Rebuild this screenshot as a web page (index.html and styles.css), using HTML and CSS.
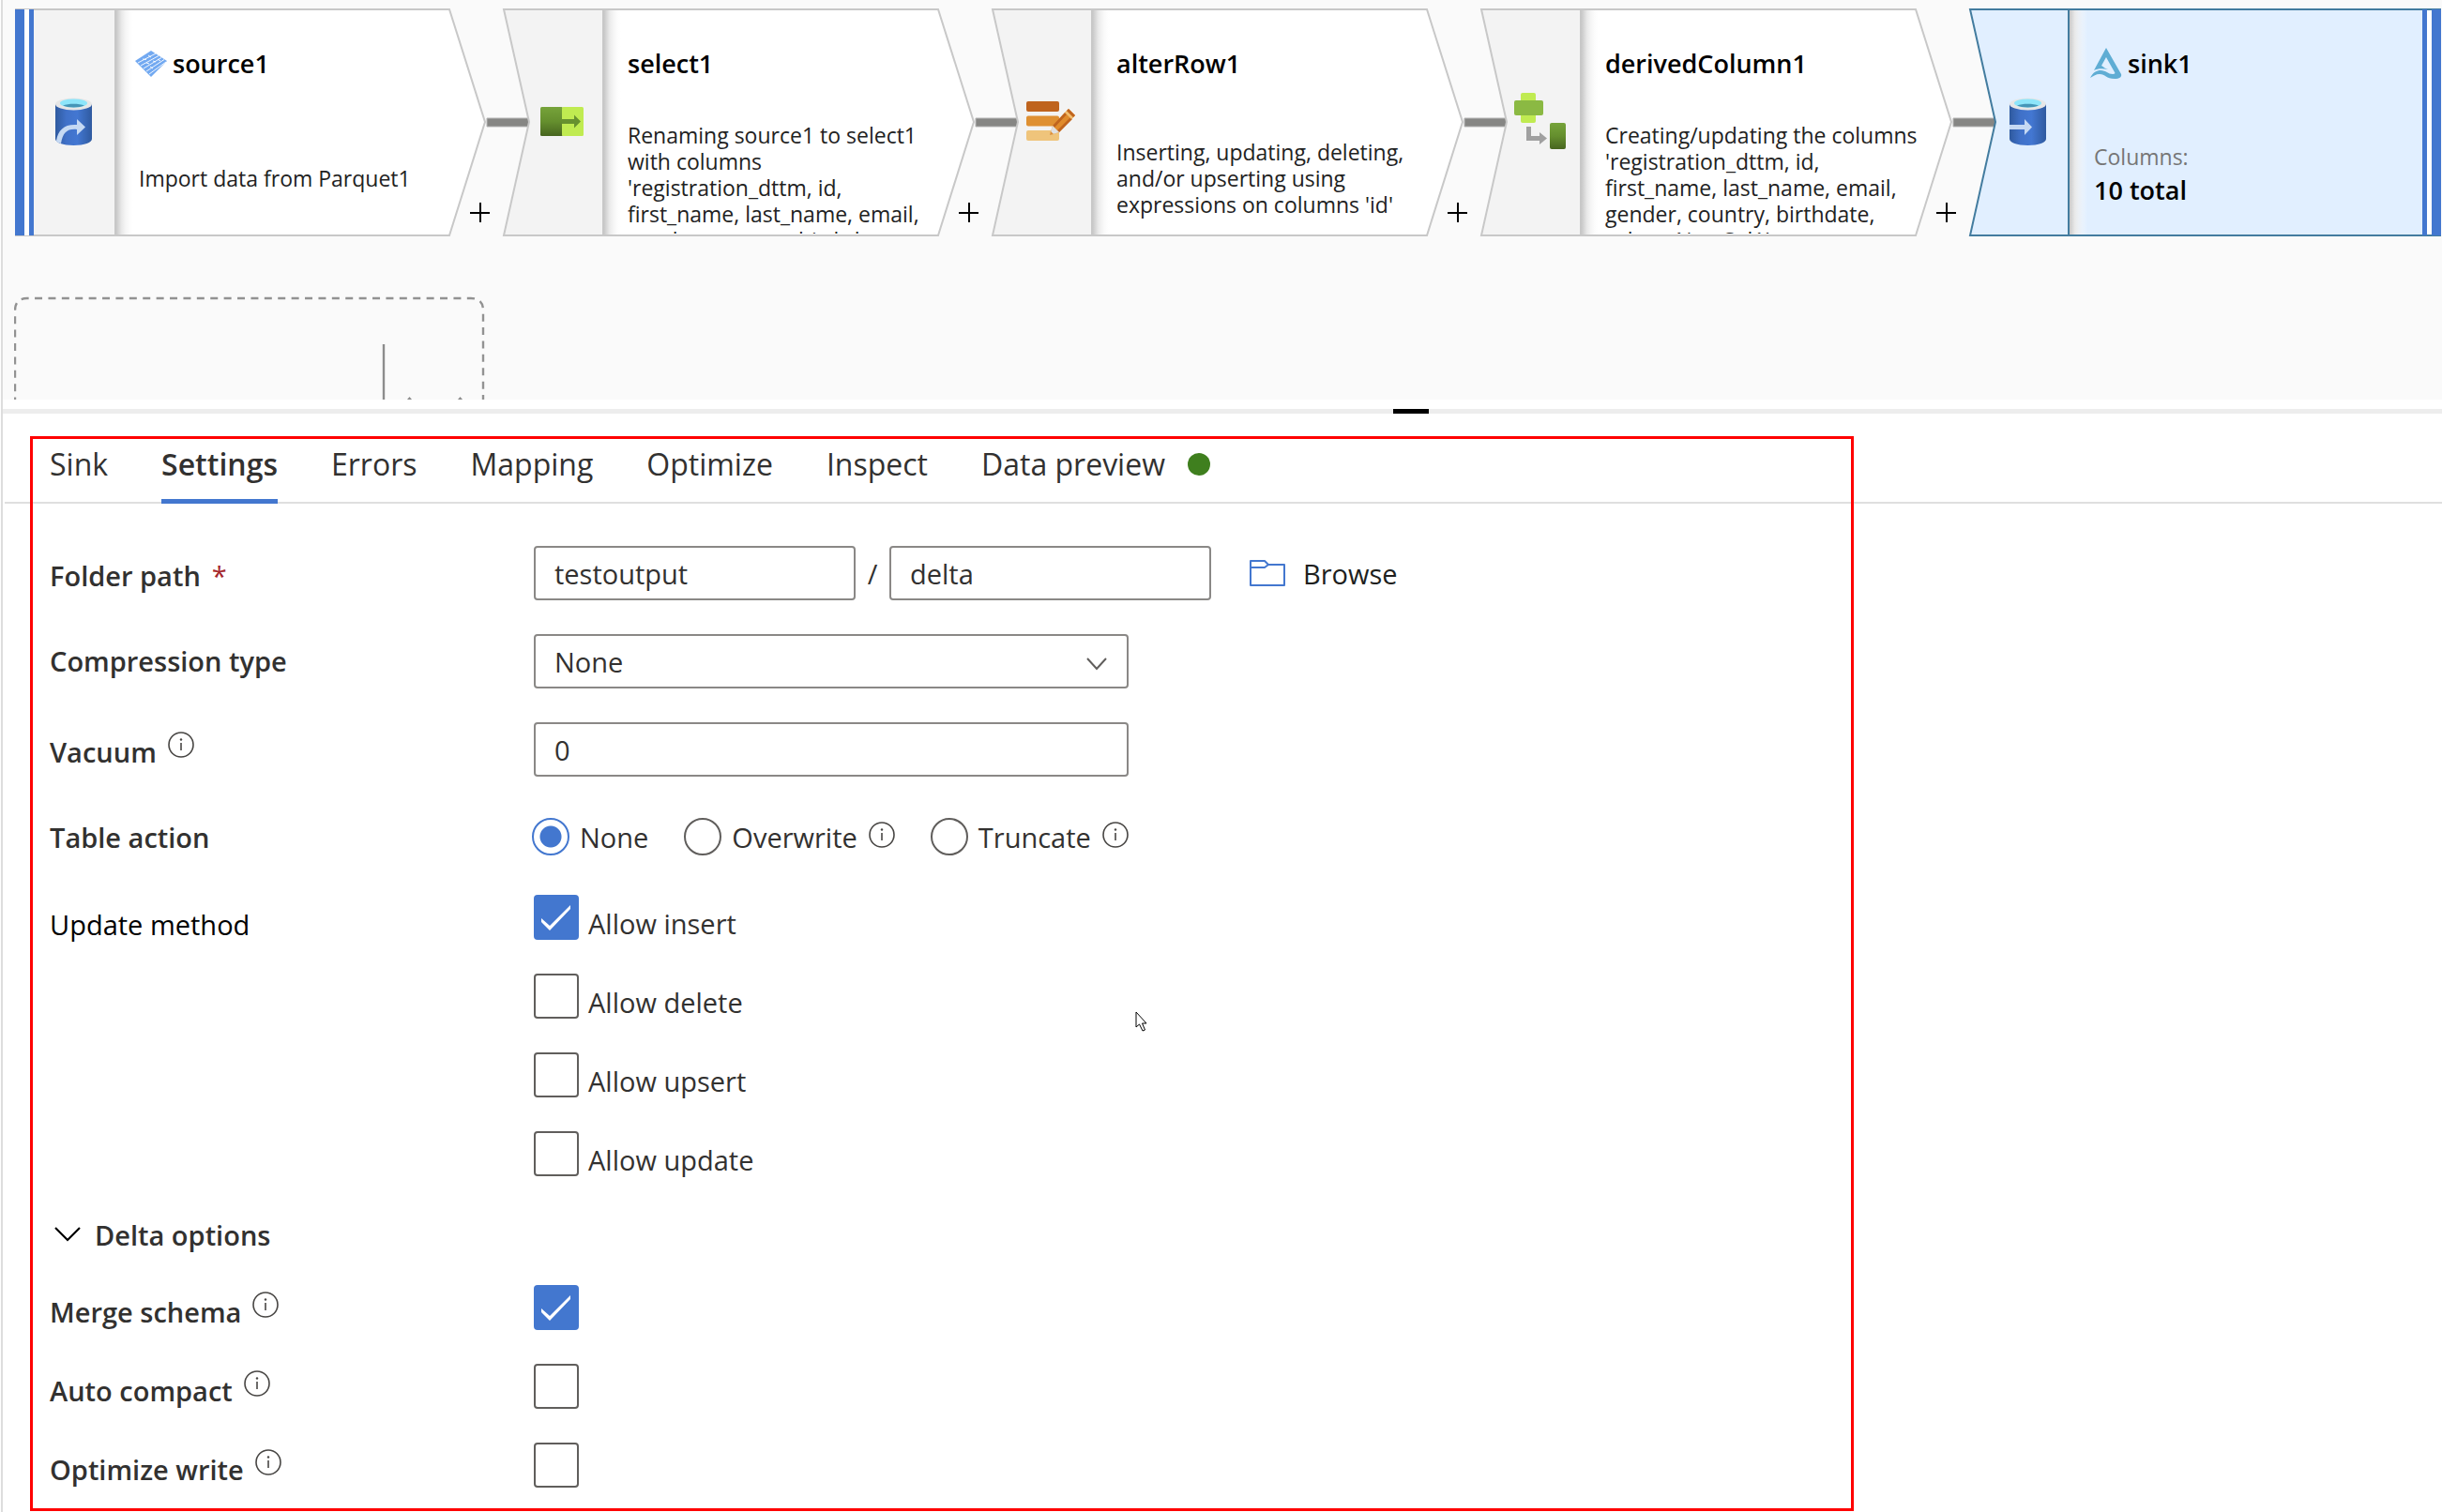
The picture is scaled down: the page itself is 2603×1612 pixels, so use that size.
FILE: index.html
```html
<!DOCTYPE html>
<html lang="en">
<head>
  <meta charset="UTF-8" />
  <title>Data flow - sink1</title>
  <meta name="viewport" content="width=device-width, initial-scale=1.0" />
  <link rel="stylesheet" href="styles.css">
</head>
<body>
  <!-- shared gradients and the info icon -->
  <svg class="defs" width="0" height="0" aria-hidden="true">
    <defs>
      <linearGradient id="shade" x1="0" x2="1" y1="0" y2="0">
        <stop offset="0" stop-color="#c9c9c9" />
        <stop offset="0.3" stop-color="#e9e9e9" />
        <stop offset="1" stop-color="#ffffff" stop-opacity="0" />
      </linearGradient>
      <linearGradient id="can" x1="0" x2="1" y1="0" y2="0">
        <stop offset="0" stop-color="#2f5a9f" />
        <stop offset="0.3" stop-color="#4071c8" />
        <stop offset="0.6" stop-color="#4377d2" />
        <stop offset="1" stop-color="#2f5a9f" />
      </linearGradient>
      <linearGradient id="green" x1="0" x2="0" y1="0" y2="1">
        <stop offset="0" stop-color="#76a33a" />
        <stop offset="0.5" stop-color="#658f2e" />
        <stop offset="1" stop-color="#47651f" />
      </linearGradient>
      <symbol id="info" viewBox="0 0 28 28">
        <circle cx="14" cy="14" r="13" fill="none" stroke="#484644" stroke-width="1.6" />
        <path d="M14 12V20" stroke="#484644" stroke-width="1.6" />
        <circle cx="14" cy="8.5" r="1.2" fill="#484644" />
      </symbol>
    </defs>
  </svg>

  <main class="editor">
    <section class="canvas">
      <div class="stream">
        <article class="node">
          <svg class="shape" viewBox="0 0 502 243">
            <path d="M2 1H108V242H2Z" fill="#f3f3f3" stroke="#c8c8c8" stroke-width="2" />
            <path d="M108 1H464L502 121L464 242H108Z" fill="#ffffff" stroke="#c8c8c8" stroke-width="2" />
            <path d="M109 2H128V241H109Z" fill="url(#shade)" />
            <path d="M1 1H11V242H1Z M16 1H21V242H16Z" fill="#4377cf" />
            <path d="M11 1H16V242H11Z" fill="#ffffff" />
            <g transform="translate(44 95)">
              <path d="M0 7V44C0 48 8 51 19.500 51S39 48 39 44V7Z" fill="url(#can)" />
              <ellipse cx="19.500" cy="7" rx="19.500" ry="6.500" fill="#e6e6e6" />
              <ellipse cx="19.500" cy="6" rx="14.500" ry="4.500" fill="#8de5fa" />
              <path d="M8 8.500C14 6 25 6 31 8.500C26 11 13 11 8 8.500Z" fill="#4596b8" />
              <path d="M1 46C3 34 10 28 23 29V23L32 31.500L23 40V34C13 33 8 37 6 49C3 48 1 47.500 1 46Z" fill="#c5d9f3" />
            </g>
          </svg>
          <div class="node-body">
            <h2 class="node-title with-icon">
              <svg width="34" height="28" viewBox="0 0 34 28">
                <path d="M17 0L34 11L17 28L0 11Z" fill="#72a9f1" />
                <path d="M3 13L22 3M6 16L25 5.500M9 19L28 7.500M12 22L31 9.500M15 25L33 12M8 9L12 9.500M14 5L17 7M12 13L15 14M19 11L22 12M16 17L19 19M24 9L27 11" stroke="#ffffff" stroke-width="0.9" />
              </svg>source1</h2>
            <div class="node-text"><p>Import data from Parquet1</p></div>
          </div>
          <button class="add" aria-label="Add after source1"></button>
        </article>

        <article class="node">
          <svg class="shape" viewBox="0 0 502 243">
            <path d="M-17 117H28V126H-17Z" fill="#868684" stroke="#b5b5b5" />
            <path d="M1 1H107V242H1L28 121Z" fill="#f3f3f3" stroke="#c8c8c8" stroke-width="2" />
            <path d="M107 1H464L502 121L464 242H107Z" fill="#ffffff" stroke="#c8c8c8" stroke-width="2" />
            <path d="M108 2H127V241H108Z" fill="url(#shade)" />
            <g transform="translate(40 105)">
              <rect width="24" height="31" rx="1.500" fill="url(#green)" />
              <rect x="23" width="23" height="31" rx="1.500" fill="#c0eb51" />
              <path d="M23 13H36V8.500L43 15.500L36 22.500V18H23Z" fill="#67912f" />
            </g>
          </svg>
          <div class="node-body">
            <h2 class="node-title">select1</h2>
            <div class="node-text"><p>Renaming source1 to select1 with columns 'registration_dttm, id, first_name, last_name, email, gender, country, birthdate, salary'</p></div>
          </div>
          <button class="add" aria-label="Add after select1"></button>
        </article>

        <article class="node">
          <svg class="shape" viewBox="0 0 502 243">
            <path d="M-17 117H28V126H-17Z" fill="#868684" stroke="#b5b5b5" />
            <path d="M1 1H107V242H1L28 121Z" fill="#f3f3f3" stroke="#c8c8c8" stroke-width="2" />
            <path d="M107 1H464L502 121L464 242H107Z" fill="#ffffff" stroke="#c8c8c8" stroke-width="2" />
            <path d="M108 2H127V241H108Z" fill="url(#shade)" />
            <g transform="translate(37 99)">
              <rect width="35" height="11" rx="2" fill="#bf641e" />
              <rect y="15.500" width="35" height="11" rx="2" fill="#df9032" />
              <rect y="31" width="35" height="11" rx="2" fill="#efc47b" />
              <path d="M25 36L28 26L45 8L52 15L35 33Z" fill="#e08b2c" />
              <path d="M28 26L41 12L43 14L30 28ZM33 31L47 17L49 19L35 33Z" fill="#bf641e" />
              <path d="M41 12L43 10L50 17L48 19Z" fill="#f0bd70" />
              <path d="M43 10L45 8L52 15L50 17Z" fill="#bf641e" />
              <path d="M25 36L28 26L35 33Z" fill="#e0e0e0" />
              <path d="M25 36L26 32L29 35Z" fill="#df9032" />
            </g>
          </svg>
          <div class="node-body">
            <h2 class="node-title">alterRow1</h2>
            <div class="node-text"><p>Inserting, updating, deleting, and/or upserting using expressions on columns 'id'</p></div>
          </div>
          <button class="add" aria-label="Add after alterRow1"></button>
        </article>

        <article class="node">
          <svg class="shape" viewBox="0 0 502 243">
            <path d="M-17 117H28V126H-17Z" fill="#868684" stroke="#b5b5b5" />
            <path d="M1 1H107V242H1L28 121Z" fill="#f3f3f3" stroke="#c8c8c8" stroke-width="2" />
            <path d="M107 1H464L502 121L464 242H107Z" fill="#ffffff" stroke="#c8c8c8" stroke-width="2" />
            <path d="M108 2H127V241H108Z" fill="url(#shade)" />
            <g transform="translate(36 90)">
              <rect x="7" width="16" height="32" rx="2" fill="#c0eb51" />
              <rect y="8" width="31" height="16" rx="2" fill="#8bb943" />
              <rect x="38" y="32" width="17" height="28" rx="2" fill="url(#green)" />
              <path d="M13 36H18V46H27V42L35 48.500L27 55V51H13Z" fill="#a0a0a0" />
            </g>
          </svg>
          <div class="node-body">
            <h2 class="node-title">derivedColumn1</h2>
            <div class="node-text"><p>Creating/updating the columns 'registration_dttm, id, first_name, last_name, email, gender, country, birthdate, salary, NewCol1'</p></div>
          </div>
          <button class="add" aria-label="Add after derivedColumn1"></button>
        </article>

        <article class="node">
          <svg class="shape" viewBox="0 0 502 243">
            <path d="M-17 117H28V126H-17Z" fill="#868684" stroke="#b5b5b5" />
            <path d="M1 1H106V242H1L28 121Z" fill="#e1efff" stroke="#437c9f" stroke-width="2" />
            <path d="M106 1H502V242H106Z" fill="#e1efff" stroke="#437c9f" stroke-width="2" />
            <path d="M107 2H126V241H107Z" fill="url(#shade)" />
            <path d="M493 1H503V242H493Z M483 1H488V242H483Z" fill="#4377cf" />
            <path d="M488 2H493V241H488Z" fill="#ffffff" />
            <g transform="translate(43 95)">
              <path d="M0 7V44C0 48 8 51 19.500 51S39 48 39 44V7Z" fill="url(#can)" />
              <ellipse cx="19.500" cy="7" rx="19.500" ry="6.500" fill="#e6e6e6" />
              <ellipse cx="19.500" cy="6" rx="14.500" ry="4.500" fill="#8de5fa" />
              <path d="M8 8.500C14 6 25 6 31 8.500C26 11 13 11 8 8.500Z" fill="#4596b8" />
              <path d="M0 29H16V23L24 31.500L16 40V34H0Z" fill="#c5d9f3" />
            </g>
          </svg>
          <div class="node-body">
            <h2 class="node-title with-icon">
              <svg width="34" height="34" viewBox="0 0 34 34">
                <path d="M17 0L33 28C34 31 31 33 26 33C17 33 16 28 10 28C6 28 4 30 0 32C3 26 7 24 11 24C17 24 19 28 24 28C26 28 27 27 26 26L17 10L12 19C15 21 16 22 19 23C13 22 8 22 4 24Z" fill="#5fadd4" />
              </svg>sink1</h2>
            <div class="node-count"><span>Columns:</span><strong>10 total</strong></div>
          </div>
        </article>
      </div>

      <!-- empty source placeholder, cut off by the splitter -->
      <svg class="placeholder" width="504" height="110" viewBox="0 0 504 110">
        <path d="M1 130V15Q1 2 14 2H487Q500 2 500 15V130" fill="none" stroke="#929292" stroke-width="2.400" stroke-dasharray="8 6.400" />
        <path d="M394 51V110" stroke="#8c8c8c" stroke-width="2.400" />
        <path d="M419 110L421.500 107L424 110ZM473 110L475.500 107L478 110Z" fill="#8c8c8c" />
      </svg>
    </section>

    <div class="splitter"><span class="grip"></span></div>

    <section class="panel">
      <nav class="tabs">
        <a href="#sink">Sink</a>
        <a href="#settings" class="active">Settings</a>
        <a href="#errors">Errors</a>
        <a href="#mapping">Mapping</a>
        <a href="#optimize">Optimize</a>
        <a href="#inspect">Inspect</a>
        <a href="#preview">Data preview<span class="dot"></span></a>
      </nav>

      <form class="settings" id="settings">
        <div class="field">
          <label class="name low" for="container">Folder path <span class="required">*</span></label>
          <div class="control">
            <input type="text" class="box short" id="container" value="testoutput" />
            <span class="slash">/</span>
            <input type="text" class="box short" id="folder" value="delta" aria-label="Folder" />
            <button type="button" class="browse">
              <svg width="38" height="30" viewBox="0 0 38 30">
                <path d="M1 28V2H16L20 6H37V28ZM1 9H16L20 6" fill="none" stroke="#4377cf" stroke-width="2" stroke-linejoin="round" />
              </svg>Browse</button>
          </div>
        </div>

        <div class="field">
          <label class="name" for="compression">Compression type</label>
          <div class="control select">
            <select class="box" id="compression">
              <option>None</option>
            </select>
            <svg class="arrow" width="22" height="14" viewBox="0 0 22 14">
              <path d="M1 1L11 12L21 1" fill="none" stroke="#605e5c" stroke-width="2" />
            </svg>
          </div>
        </div>

        <div class="field">
          <label class="name low" for="vacuum">Vacuum <svg class="info"><use href="#info" /></svg></label>
          <div class="control"><input type="text" class="box" id="vacuum" value="0" /></div>
        </div>

        <div class="field radios">
          <span class="name" id="actionLabel">Table action</span>
          <div class="control" role="radiogroup" aria-labelledby="actionLabel">
            <label class="radio"><input type="radio" name="action" checked />None</label>
            <label class="radio"><input type="radio" name="action" />Overwrite <svg class="info"><use href="#info" /></svg></label>
            <label class="radio"><input type="radio" name="action" />Truncate <svg class="info"><use href="#info" /></svg></label>
          </div>
        </div>

        <div class="field">
          <span class="name plain low">Update method</span>
          <div class="checks">
            <label class="check"><input type="checkbox" checked /><span>Allow insert</span></label>
            <label class="check"><input type="checkbox" /><span>Allow delete</span></label>
            <label class="check"><input type="checkbox" /><span>Allow upsert</span></label>
            <label class="check"><input type="checkbox" /><span>Allow update</span></label>
          </div>
        </div>

        <button type="button" class="group">
          <svg width="28" height="16" viewBox="0 0 28 16">
            <path d="M1 1L14 14L27 1" fill="none" stroke="#000000" stroke-width="2.200" />
          </svg>Delta options</button>

        <div class="field">
          <label class="name" for="merge">Merge schema <svg class="info"><use href="#info" /></svg></label>
          <div class="check"><input type="checkbox" id="merge" checked /></div>
        </div>
        <div class="field">
          <label class="name" for="compact">Auto compact <svg class="info"><use href="#info" /></svg></label>
          <div class="check"><input type="checkbox" id="compact" /></div>
        </div>
        <div class="field">
          <label class="name" for="optimizeWrite">Optimize write <svg class="info"><use href="#info" /></svg></label>
          <div class="check"><input type="checkbox" id="optimizeWrite" /></div>
        </div>
      </form>

      <div class="highlight"></div>
      <svg class="pointer" width="13" height="22" viewBox="0 0 13 22">
        <path d="M1 1V17L4.500 14L8 21L10.500 20L7.500 13H12Z" fill="#ffffff" stroke="#000000" />
      </svg>
    </section>
  </main>
</body>
</html>
```

FILE: styles.css
```css
* {
  box-sizing: border-box;
}

body {
  margin: 0;
  font-family: 'Segoe UI', 'Open Sans', sans-serif;
  font-size: 29px;
  color: #323130;
  background-color: white;
}

button,
input,
select {
  font: inherit;
  color: inherit;
}

button {
  padding: 0;
  border: none;
  background: none;
  cursor: pointer;
}

.defs {
  position: absolute;
}

.editor {
  margin-left: 1px;
  border-left: 2px solid #dddddd;
  min-height: 100vh;
  overflow: hidden;
}

/* Canvas */
.canvas {
  height: 426px;
  padding: 9px 0 0 12px;
  background-color: #fafafa;
  overflow: hidden;
}

.stream {
  display: flex;
  gap: 19px;
}

.node {
  position: relative;
  flex: none;
  width: 502px;
  height: 243px;
}

.shape {
  position: absolute;
  inset: 0;
  overflow: visible;
}

.node-body {
  position: relative;
  height: 100%;
  padding: 39px 0 3px 133px;
  display: flex;
  flex-direction: column;
}

.node-title {
  margin: 0 0 42px;
  font-size: 27px;
  font-weight: 600;
  line-height: 40px;
  color: black;
}

.with-icon {
  display: flex;
  align-items: center;
  gap: 6px;
  margin-left: -4px;
}

.node-text {
  width: 338px;
  flex: 1;
  min-height: 0;
  display: flex;
  align-items: safe center;
  overflow: hidden;
  font-size: 23px;
  line-height: 28px;
  color: #222222;
}

.node-text p {
  margin: 0;
}

.node-count {
  display: flex;
  flex-direction: column;
  margin-top: -22px;
  padding-top: 42px;
  font-size: 23px;
  line-height: 35px;
  color: #767676;
}

.node-count strong {
  font-size: 27px;
  font-weight: 600;
  color: black;
}

.add {
  position: absolute;
  left: 486px;
  top: 207px;
  width: 21px;
  height: 21px;
  background:
    linear-gradient(black, black) center / 100% 2px no-repeat,
    linear-gradient(black, black) center / 2px 100% no-repeat;
}

.placeholder {
  display: block;
  margin-top: 64px;
}

/* Splitter */
.splitter {
  margin-top: 10px;
  height: 5px;
  background-color: #ededed;
  display: flex;
  justify-content: center;
}

.grip {
  width: 38px;
  margin-left: 402px;
  background-color: black;
}

/* Settings panel */
.panel {
  position: relative;
}

.tabs {
  display: flex;
  gap: 57px;
  height: 96px;
  margin-left: 2px;
  padding: 31px 0 0 48px;
  border-bottom: 2px solid #dfdfdf;
  font-size: 32px;
  line-height: 48px;
}

.tabs a {
  display: flex;
  align-items: center;
  height: 65px;
  padding-bottom: 14px;
  border-bottom: 5px solid transparent;
  color: inherit;
  text-decoration: none;
}

.tabs .active {
  font-weight: 600;
  border-color: #4377cf;
}

.dot {
  width: 24px;
  height: 24px;
  margin-left: 24px;
  border-radius: 50%;
  background-color: #3f7f1e;
}

.settings {
  padding: 45px 0 0 50px;
}

.field {
  display: grid;
  grid-template-columns: 516px 1fr;
  margin-bottom: 36px;
}

.name {
  display: flex;
  align-items: flex-start;
  gap: 12px;
  padding-top: 10px;
  font-weight: 600;
  line-height: 38px;
}

.low {
  padding-top: 13px;
}

.plain {
  font-weight: 400;
  color: black;
}

.required {
  font-weight: 400;
  color: #a4262c;
}

.info {
  width: 28px;
  height: 28px;
  margin-top: -3px;
}

.control {
  display: flex;
  align-items: center;
}

.box {
  width: 634px;
  height: 58px;
  padding: 1px 20px 0;
  border: 2px solid #8a8886;
  border-radius: 4px;
  background-color: white;
  appearance: none;
}

.short {
  width: 343px;
}

.slash {
  width: 36px;
  text-align: center;
}

.browse {
  display: flex;
  align-items: center;
  gap: 19px;
  margin-left: 41px;
  color: #201f1e;
}

.select {
  position: relative;
  justify-self: start;
}

.arrow {
  position: absolute;
  right: 23px;
  top: 25px;
}

.radios {
  height: 54px;
}

.radios .control {
  padding-top: 2px;
}

.radio {
  display: flex;
  align-items: center;
  margin-right: 40px;
}

.radio .info {
  margin: 0 0 5px 12px;
}

.radio input {
  appearance: none;
  width: 40px;
  height: 40px;
  margin: 0 11px 0 -2px;
  border: 2px solid #605e5c;
  border-radius: 50%;
}

.radio input:checked {
  border-color: #4377cf;
  background: radial-gradient(circle, #4377cf 11px, transparent 12px);
}

.checks {
  display: flex;
  flex-direction: column;
  gap: 36px;
}

.check {
  display: flex;
  gap: 10px;
  height: 48px;
  line-height: 38px;
}

.check span {
  padding-top: 12px;
}

.check input {
  appearance: none;
  width: 48px;
  height: 48px;
  margin: 0;
  border: 2px solid #605e5c;
  border-radius: 4px;
}

.check input:checked {
  border: none;
  background-color: #4377cf;
}

.check input:checked::before {
  content: "";
  display: block;
  height: 48px;
  background-color: white;
  clip-path: polygon(8px 25px, 17px 33px, 39px 11px, 39px 15px, 17px 38px, 8px 29px);
}

.group {
  display: flex;
  align-items: center;
  gap: 15px;
  height: 52px;
  margin: 0 0 28px 5px;
  font-weight: 600;
}

/* Overlays */
.highlight {
  position: absolute;
  top: 24px;
  left: 29px;
  right: 627px;
  height: 1146px;
  border: 3px solid #ff0000;
  pointer-events: none;
}

.pointer {
  position: absolute;
  left: 1207px;
  top: 637px;
}
```
